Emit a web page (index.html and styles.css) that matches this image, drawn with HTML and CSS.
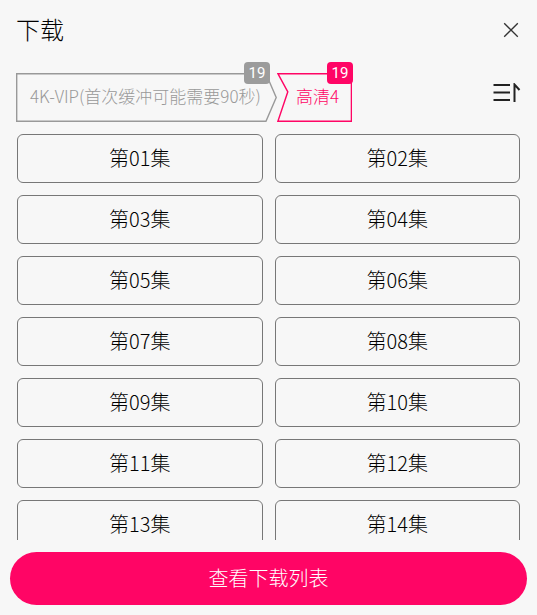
FILE: index.html
```
<!DOCTYPE html>
<html lang="zh-CN">

<head>
  <meta charset="utf-8">
  <meta name="viewport" content="width=device-width, initial-scale=1.0">
  <title>下载</title>
  <link rel="stylesheet" href="styles.css">
</head>

<body>
  <header class="header">
    <h1>下载</h1>
    <button class="icon-btn" type="button" aria-label="关闭">
      <svg width="16" height="16" viewBox="0 0 16 16">
        <path d="M1.2 1.2L14.8 14.8M14.8 1.2L1.2 14.8" fill="none" stroke="#333" stroke-width="1.3" />
      </svg>
    </button>
  </header>

  <div class="toolbar">
    <div class="sources">
      <button class="source" type="button">
        <svg class="shape" viewBox="0 0 262 49" preserveAspectRatio="none">
          <path d="M0.7 0.7H251L261.3 24.5L251 48.3H0.7Z" />
        </svg>
        4K-VIP(首次缓冲可能需要90秒)
        <span class="badge">19</span>
      </button>
      <button class="source active" type="button">
        <svg class="shape" viewBox="0 0 75 49" preserveAspectRatio="none">
          <path d="M0.9 0.7H74.3V48.3H0.9L10.8 18.8Z" />
        </svg>
        高清4
        <span class="badge">19</span>
      </button>
    </div>
    <button class="icon-btn" type="button" aria-label="排序">
      <svg width="28" height="20" viewBox="0 0 28 20">
        <path d="M0.5 2H17M0.5 9.5H17M0.5 17H17M21.5 19V1.5L26.5 7" fill="none" stroke="#222" stroke-width="2" />
      </svg>
    </button>
  </div>

  <main class="episodes">
    <button type="button">第01集</button>
    <button type="button">第02集</button>
    <button type="button">第03集</button>
    <button type="button">第04集</button>
    <button type="button">第05集</button>
    <button type="button">第06集</button>
    <button type="button">第07集</button>
    <button type="button">第08集</button>
    <button type="button">第09集</button>
    <button type="button">第10集</button>
    <button type="button">第11集</button>
    <button type="button">第12集</button>
    <button type="button">第13集</button>
    <button type="button">第14集</button>
  </main>

  <footer class="footer">
    <button class="view-list" type="button">查看下载列表</button>
  </footer>
</body>

</html>
```

FILE: styles.css
```
* {
  box-sizing: border-box;
}

body {
  margin: 0;
  height: 100vh;
  display: flex;
  flex-direction: column;
  background: #f7f7f7;
  color: #000;
  font-family: "Noto Sans CJK SC", sans-serif;
  font-weight: 300;
}

button {
  font: inherit;
  color: inherit;
  background: none;
  border: 0;
  padding: 0;
  cursor: pointer;
}

.header {
  display: flex;
  align-items: center;
  justify-content: space-between;
  height: 60px;
  padding: 0 18px 0 16px;
}

.header h1 {
  margin: 0;
  padding-bottom: 3px;
  font-size: 24px;
  font-weight: 300;
}

.icon-btn {
  display: flex;
}

.toolbar {
  display: flex;
  align-items: flex-start;
  justify-content: space-between;
  padding: 13px 16px 12px;
}

.toolbar .icon-btn {
  margin-top: 10px;
}

.sources {
  display: flex;
  white-space: nowrap;
}

/* the arrow outline is stretched behind the label */
.source {
  position: relative;
  height: 49px;
  padding: 0 16px 4px 14px;
  font-size: 17px;
  color: #999;
}

.source.active {
  padding: 0 13px 4px 19px;
  color: #ff0565;
}

.shape {
  position: absolute;
  top: 0;
  left: 0;
  width: 100%;
  height: 100%;
  fill: none;
  stroke: currentColor;
  stroke-width: 1.4;
}

.badge {
  position: absolute;
  top: -11px;
  right: 7px;
  width: 26px;
  border-radius: 4px;
  background: #9c9c9c;
  color: #fff;
  font: 400 15px/22px Roboto, sans-serif;
  text-align: center;
}

.active .badge {
  right: -1px;
  background: #ff0565;
}

.episodes {
  flex: 1;
  min-height: 0;
  overflow-y: auto;
  scrollbar-width: none;
  display: grid;
  grid-template-columns: 1fr 1fr;
  grid-auto-rows: 49px;
  gap: 12px;
  padding: 0 17px;
}

.episodes button {
  padding-bottom: 2px;
  border: 1px solid #777;
  border-radius: 6px;
  font-size: 20px;
}

.footer {
  display: flex;
  padding: 12px 10px 10px;
}

.view-list {
  flex: 1;
  height: 53px;
  padding-bottom: 2px;
  border-radius: 27px;
  background: #ff0565;
  color: #fff;
  font-size: 20px;
}
```
